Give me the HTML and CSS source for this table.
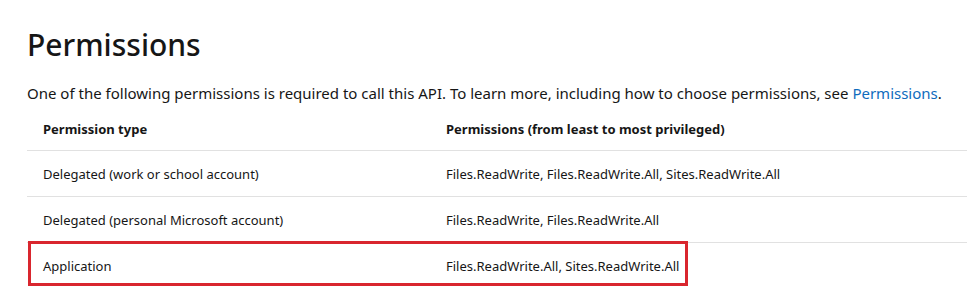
FILE: index.html
```html
<!DOCTYPE html>
<html lang="en">
<head>
    <meta charset="UTF-8">
    <meta name="viewport" content="width=device-width, initial-scale=1.0">
    <title>Permissions</title>
    <link rel="stylesheet" href="styles.css">
</head>
<body>
    <div class="content">
        <h2 class="section-title">Permissions</h2>
        <p class="intro">One of the following permissions is required to call this API. To learn more, including how to choose permissions, see <a href="#">Permissions</a>.</p>

        <div class="table-wrap">
            <table class="perm-table">
                <thead>
                    <tr>
                        <th class="col-type">Permission type</th>
                        <th>Permissions (from least to most privileged)</th>
                    </tr>
                </thead>
                <tbody>
                    <tr>
                        <td>Delegated (work or school account)</td>
                        <td>Files.ReadWrite, Files.ReadWrite.All, Sites.ReadWrite.All</td>
                    </tr>
                    <tr>
                        <td>Delegated (personal Microsoft account)</td>
                        <td>Files.ReadWrite, Files.ReadWrite.All</td>
                    </tr>
                    <tr>
                        <td>Application</td>
                        <td>Files.ReadWrite.All, Sites.ReadWrite.All</td>
                    </tr>
                </tbody>
            </table>
            <!-- 标注框 -->
            <div class="highlight"></div>
        </div>
    </div>
</body>
</html>
```

FILE: styles.css
```css
body {
    font-family: 'Segoe UI', 'Noto Sans', sans-serif;
    margin: 0;
    padding: 0;
    background-color: #fff;
    color: #161616;
}
.content {
    padding: 0 11px 0 27px;
}
.section-title {
    font-size: 30px;
    font-weight: 500;
    margin: 0;
    padding-top: 24px;
    line-height: 42px;
}
.intro {
    font-size: 15px;
    margin: 15px 0 0;
    line-height: 24px;
}
.intro a {
    color: #0f6cbd;
    text-decoration: none;
}
.table-wrap {
    position: relative;
    margin-top: 3px;
}
.perm-table {
    width: 100%;
    border-collapse: collapse;
    font-size: 13px;
}
.perm-table th,
.perm-table td {
    text-align: left;
    padding: 0 16px;
    height: 45px;
    border-top: 1px solid #e1e1e1;
}
.perm-table th {
    font-weight: 700;
    border-top: none;
    height: 42px;
}
.perm-table .col-type {
    width: 371px;
}
.highlight {
    position: absolute;
    left: 1px;
    top: 133px;
    width: 654px;
    height: 39px;
    border: 3px solid #d9262e;
}
```
